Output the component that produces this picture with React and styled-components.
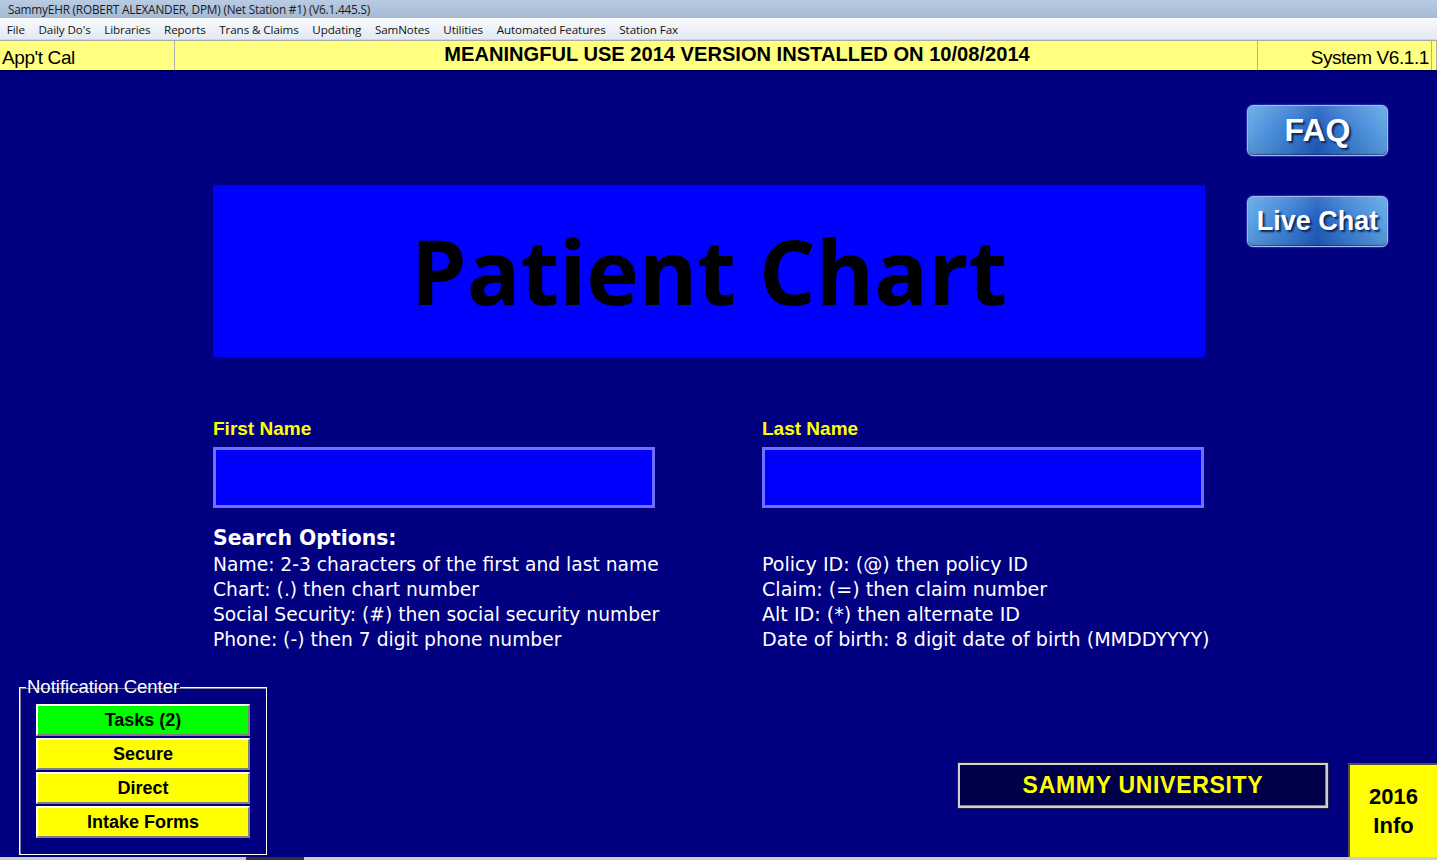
import React from "react";
import styled, { createGlobalStyle } from "styled-components";

const GlobalStyle = createGlobalStyle`
  html, body {
    margin: 0;
    padding: 0;
    overflow: hidden;
    background: #000080;
  }
  #root {
    width: 1437px;
    height: 860px;
  }
`;

const Screen = styled.div`
  width: 1437px;
  height: 860px;
  display: flex;
  flex-direction: column;
  font-family: "Liberation Sans", Arial, sans-serif;
`;

const TitleBar = styled.div`
  height: 18px;
  flex: 0 0 18px;
  background: linear-gradient(180deg, #b9cbe2 0%, #a6bad6 100%);
  color: #1a1a1a;
  font-family: "Open Sans", "DejaVu Sans", sans-serif;
  font-size: 11.8px;
  line-height: 18px;
  padding-left: 8px;
  letter-spacing: -0.2px;
`;

const MenuBar = styled.div`
  height: 22px;
  flex: 0 0 22px;
  display: flex;
  align-items: center;
  padding-left: 0;
  background: linear-gradient(180deg, #f7f9fc 0%, #e4eaf2 100%);
  border-top: 1px solid #ffffff;
  border-bottom: 1px solid #d0d7e2;
  box-sizing: border-box;
`;

const MenuItem = styled.span`
  font-family: "Open Sans", "DejaVu Sans", sans-serif;
  font-size: 11.65px;
  color: #111;
  padding: 0 6.8px;
  letter-spacing: -0.1px;
`;

const StatusBar = styled.div`
  flex: 0 0 32px;
  height: 32px;
  display: flex;
  background: #ffff80;
  border-top: 1px solid #a8a8a8;
  box-sizing: border-box;
  border-bottom: 2px solid #000050;
`;

const StatusCell = styled.div`
  width: ${(p) => p.$w || "auto"};
  flex: ${(p) => (p.$grow ? "1" : "0 0 auto")};
  border-right: 1px solid #b0b0b0;
  display: flex;
  align-items: ${(p) => (p.$center ? "center" : "flex-end")};
  justify-content: ${(p) => p.$justify || "flex-start"};
  padding: ${(p) => (p.$center ? "0 0 2px 42px" : "0 2px 1px 2px")};
  font-size: ${(p) => (p.$bold ? "20.1px" : "19px")};
  font-weight: ${(p) => (p.$bold ? 700 : 400)};
  color: #000;
  box-sizing: border-box;
  letter-spacing: ${(p) => (p.$bold ? "0" : "-0.4px")};
`;

const Main = styled.div`
  flex: 1;
  background: #000080;
  display: flex;
  flex-direction: column;
  justify-content: space-between;
`;

const TopRow = styled.div`
  display: flex;
`;

const CenterCol = styled.div`
  margin-left: 213px;
  width: 992px;
  padding-top: 113px;
`;

const SideCol = styled.div`
  margin-left: 42px;
  padding-top: 33px;
  display: flex;
  flex-direction: column;
  gap: 40px;
`;

const GlossButton = styled.button`
  width: 141px;
  height: 51px;
  border-radius: 6px;
  border: 1px solid #a9b6f5;
  background:
    linear-gradient(180deg, rgba(255, 255, 255, 0.12) 0%, rgba(255, 255, 255, 0) 45%, rgba(0, 0, 40, 0.12) 100%),
    linear-gradient(90deg, #5fa6e6 0%, #3b7fd4 30%, #225fbf 50%, #3b7fd4 70%, #5fa6e6 100%);
  box-shadow: 0 0 2px #7d88e8, inset 0 -1px 1px rgba(0, 0, 40, 0.4);
  color: #ffffff;
  font-family: "Liberation Sans", Arial, sans-serif;
  font-weight: 700;
  font-size: ${(p) => p.$size || 28}px;
  text-shadow: 2px 2px 2px #0b2456;
  padding: 0;
  cursor: pointer;
`;

const Banner = styled.div`
  height: 172px;
  background: #0000ff;
  display: flex;
  align-items: center;
  justify-content: center;
  font-family: "Open Sans", "Noto Sans", sans-serif;
  font-weight: 700;
  font-size: 89px;
  color: #000;
  letter-spacing: 0;
  padding-bottom: 2px;
  box-sizing: border-box;
`;

const FieldsRow = styled.div`
  display: grid;
  grid-template-columns: 442px 442px;
  column-gap: 107px;
  margin-top: 61px;
`;

const Field = styled.div`
  display: flex;
  flex-direction: column;
  gap: 7px;
`;

const FieldLabel = styled.label`
  color: #ffff00;
  font-weight: 700;
  font-size: 19px;
  line-height: 22px;
`;

const NameInput = styled.input`
  height: 61px;
  box-sizing: border-box;
  border: 3px solid #7070ff;
  background: #0000ff;
  color: #fff;
  font-size: 20px;
  outline: none;
  padding: 0 8px;
`;

const Options = styled.div`
  display: grid;
  grid-template-columns: 442px 460px;
  column-gap: 107px;
  grid-template-areas:
    "head ."
    "left right";
  margin-top: 18px;
  font-family: "DejaVu Sans", Verdana, sans-serif;
  color: #ffffff;
`;

const OptionsHead = styled.div`
  grid-area: head;
  font-weight: 700;
  font-size: 20.4px;
  line-height: 24px;
  margin-bottom: 2px;
`;

const OptionsList = styled.div`
  grid-area: ${(p) => p.$area};
  font-size: ${(p) => p.$size || 18.7}px;
  line-height: 25px;
  white-space: nowrap;
`;

const BottomRow = styled.div`
  display: flex;
  align-items: flex-end;
`;

const NotifySet = styled.fieldset`
  margin: 0 0 2px 19px;
  width: 248px;
  box-sizing: border-box;
  padding: 6px 16px 16px 16px;
  border: 1px solid #ffffff;
  box-shadow: inset 1px 1px 0 #8080a0;
  display: flex;
  flex-direction: column;
  gap: 2px;
`;

const NotifyLegend = styled.legend`
  color: #ffffff;
  font-size: 18.5px;
  padding: 0 1px;
  margin-left: -10px;
  letter-spacing: 0;
`;

const NotifyButton = styled.button`
  width: 214px;
  height: 32px;
  box-sizing: border-box;
  background: ${(p) => p.$bg};
  border: 2px solid;
  border-color: #ffffff #808080 #808080 #ffffff;
  font-family: "Liberation Sans", Arial, sans-serif;
  font-weight: 700;
  font-size: 18px;
  color: #000;
  padding: 0;
  display: block;
  cursor: pointer;
`;

const University = styled.div`
  margin-left: auto;
  margin-right: 20px;
  margin-bottom: 49px;
  width: 370px;
  height: 45px;
  box-sizing: border-box;
  border: 2px solid #d0d0d0;
  box-shadow: inset -1px -1px 0 #808080, 0 0 0 1px #202040;
  background: #00004a;
  color: #ffff00;
  font-weight: 700;
  font-size: 23px;
  letter-spacing: 0.7px;
  display: flex;
  align-items: center;
  justify-content: center;
  padding-bottom: 0;
`;

const InfoBox = styled.div`
  width: 89px;
  height: 94px;
  box-sizing: border-box;
  background: #ffff00;
  border-top: 2px solid #505050;
  border-left: 2px solid #505050;
  color: #000;
  font-weight: 700;
  font-size: 22px;
  line-height: 29px;
  text-align: center;
  display: flex;
  flex-direction: column;
  justify-content: center;
`;

const Footer = styled.div`
  flex: 0 0 3px;
  height: 3px;
  display: flex;
  background: #c8ccd4;
`;

const FooterSeg = styled.div`
  width: ${(p) => p.$w}px;
  background: ${(p) => p.$bg};
`;

const menu = [
  "File",
  "Daily Do's",
  "Libraries",
  "Reports",
  "Trans & Claims",
  "Updating",
  "SamNotes",
  "Utilities",
  "Automated Features",
  "Station Fax",
];

const leftOptions = [
  "Name: 2-3 characters of the first and last name",
  "Chart: (.) then chart number",
  "Social Security: (#) then social security number",
  "Phone: (-) then 7 digit phone number",
];

const rightOptions = [
  "Policy ID: (@) then policy ID",
  "Claim: (=) then claim number",
  "Alt ID: (*) then alternate ID",
  "Date of birth: 8 digit date of birth (MMDDYYYY)",
];

const notifications = [
  { label: "Tasks (2)", bg: "#00ff00" },
  { label: "Secure", bg: "#ffff00" },
  { label: "Direct", bg: "#ffff00" },
  { label: "Intake Forms", bg: "#ffff00" },
];

export default function App() {
  return (
    <>
      <GlobalStyle />
      <Screen>
        <TitleBar>SammyEHR (ROBERT ALEXANDER, DPM) (Net Station #1) (V6.1.445.S)</TitleBar>
        <MenuBar>
          {menu.map((m) => (
            <MenuItem key={m}>{m}</MenuItem>
          ))}
        </MenuBar>
        <StatusBar>
          <StatusCell $w="175px">App't Cal</StatusCell>
          <StatusCell $grow $center $bold $justify="center">
            MEANINGFUL USE 2014 VERSION INSTALLED ON 10/08/2014
          </StatusCell>
          <StatusCell $w="174px" $justify="flex-end">System V6.1.1</StatusCell>
          <StatusCell $w="5px" />
        </StatusBar>
        <Main>
          <TopRow>
            <CenterCol>
              <Banner>Patient Chart</Banner>
              <FieldsRow>
                <Field>
                  <FieldLabel>First Name</FieldLabel>
                  <NameInput />
                </Field>
                <Field>
                  <FieldLabel>Last Name</FieldLabel>
                  <NameInput />
                </Field>
              </FieldsRow>
              <Options>
                <OptionsHead>Search Options:</OptionsHead>
                <OptionsList $area="left">
                  {leftOptions.map((o) => (
                    <div key={o}>{o}</div>
                  ))}
                </OptionsList>
                <OptionsList $area="right" $size={19.1}>
                  {rightOptions.map((o) => (
                    <div key={o}>{o}</div>
                  ))}
                </OptionsList>
              </Options>
            </CenterCol>
            <SideCol>
              <GlossButton $size={32}>FAQ</GlossButton>
              <GlossButton $size={27}>Live Chat</GlossButton>
            </SideCol>
          </TopRow>
          <BottomRow>
            <NotifySet>
              <NotifyLegend>Notification Center</NotifyLegend>
              {notifications.map((n) => (
                <NotifyButton key={n.label} $bg={n.bg}>
                  {n.label}
                </NotifyButton>
              ))}
            </NotifySet>
            <University>SAMMY UNIVERSITY</University>
            <InfoBox>
              <div>2016</div>
              <div>Info</div>
            </InfoBox>
          </BottomRow>
        </Main>
        <Footer>
          <FooterSeg $w={246} $bg="#c8ccd4" />
          <FooterSeg $w={58} $bg="#303040" />
          <FooterSeg $w={1133} $bg="#c8ccd4" />
        </Footer>
      </Screen>
    </>
  );
}
